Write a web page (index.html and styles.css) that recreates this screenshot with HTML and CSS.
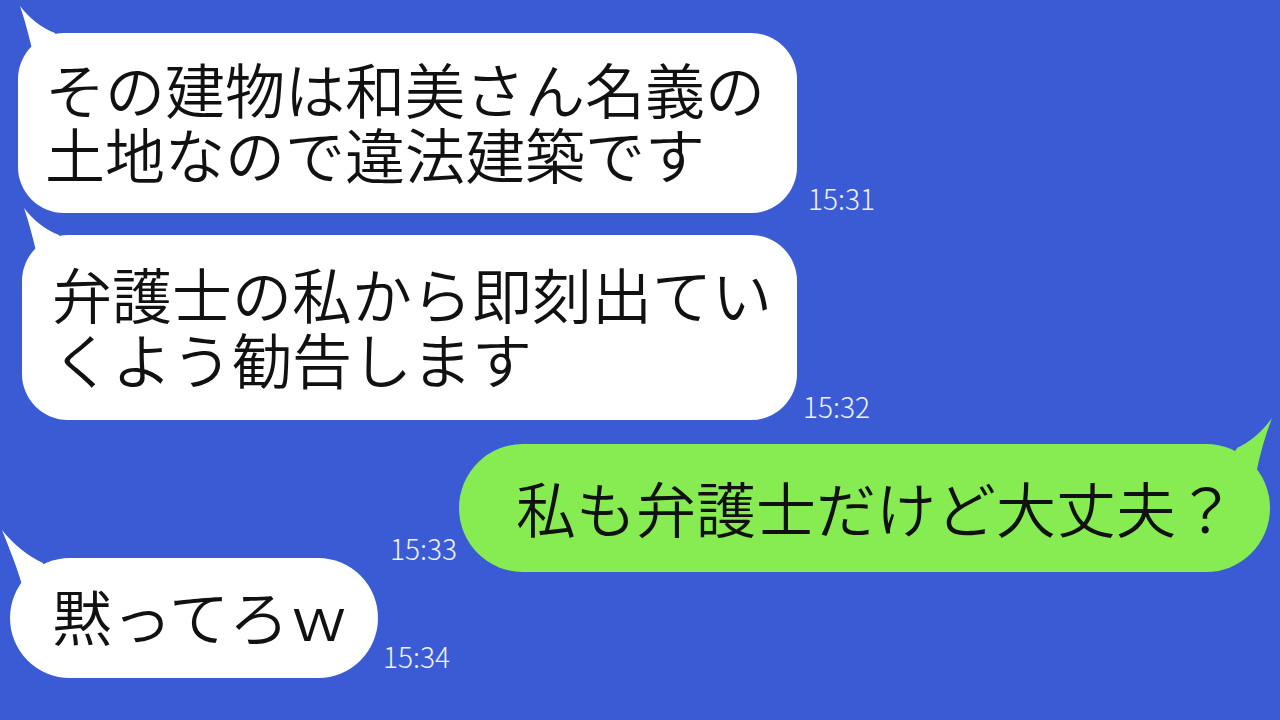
FILE: index.html
```html
<!DOCTYPE html>
<html lang="ja">
<head>
  <meta charset="UTF-8" />
  <meta name="viewport" content="width=device-width, initial-scale=1.0"/>
  <title>トーク</title>
  <link rel="stylesheet" href="styles.css">
</head>
<body>

  <div class="chat">

    <div class="row left r1">
      <div class="bubble white b1">
        <svg class="tail" viewBox="0 0 60 60" width="60" height="60"><path d="M12 3 C22 16 34 25 47 30 L56 58 L27 58 C22 38 18 20 12 3 Z"/></svg>
        その建物は和美さん名義の<br>土地なので違法建築です
      </div>
      <span class="time t1">15:31</span>
    </div>

    <div class="row left r2">
      <div class="bubble white b2">
        <svg class="tail" viewBox="0 0 60 60" width="60" height="60"><path d="M12 3 C22 16 34 25 47 30 L56 58 L27 58 C22 38 18 20 12 3 Z"/></svg>
        弁護士の私から即刻出てい<br>くよう勧告します
      </div>
      <span class="time t2">15:32</span>
    </div>

    <div class="row right r3">
      <span class="time t3">15:33</span>
      <div class="bubble green b3">
        <svg class="tail" viewBox="0 0 60 60" width="60" height="60"><path d="M8 4 C18 18 30 28 43 34 L58 60 L24 60 C20 40 15 22 8 4 Z"/></svg>
        私も弁護士だけど大丈夫？
      </div>
    </div>

    <div class="row left r4">
      <div class="bubble white b4">
        <svg class="tail" viewBox="0 0 60 60" width="60" height="60"><path d="M12 2 C24 17 38 28 53 35 L58 60 L33 60 C28 42 20 22 12 2 Z"/></svg>
        黙ってろｗ
      </div>
      <span class="time t4">15:34</span>
    </div>

  </div>

</body>
</html>
```

FILE: styles.css
```css
body {
  margin: 0;
  background-color: #3b5bd4;
  font-family: "Noto Sans CJK JP", "Noto Sans", sans-serif;
  color: #111;
  height: 720px;
  overflow: hidden;
}

.chat {
  display: flex;
  flex-direction: column;
}

.row {
  display: flex;
  align-items: flex-end;
}

.row.right {
  justify-content: flex-end;
}

/* filas */
.r1 { margin-top: 33px; padding-left: 18px; }
.r2 { margin-top: 22px; padding-left: 22px; }
.r3 { margin-top: 24px; padding-right: 10px; }
.r4 { margin-top: -14px; padding-left: 10px; }

.bubble {
  position: relative;
  font-size: 60px;
  font-weight: 350;
  line-height: 65px;
  white-space: nowrap;
}

.bubble.white { background-color: #fff; }
.bubble.green { background-color: #86ec52; }

.tail {
  position: absolute;
  top: -30px;
  left: -10px;
}

.white .tail path { fill: #fff; }
.green .tail path { fill: #86ec52; }

.b1 {
  border-radius: 46px;
  padding: 22px 32px 28px 27px;
}

.b2 {
  border-radius: 46px;
  padding: 25px 25px 30px 30px;
}

.b3 {
  border-radius: 64px;
  padding: 30px 34px 33px 57px;
}

.b3 .tail {
  left: auto;
  right: -10px;
  transform: scaleX(-1);
}

.b4 {
  border-radius: 60px;
  padding: 24px 29px 31px 42px;
}

.b4 .tail {
  left: -20px;
}

.time {
  color: #eef2ff;
  font-size: 28px;
  font-weight: 300;
  line-height: 28px;
}

.t1 { margin-left: 11px; margin-bottom: 1px; }
.t2 { margin-left: 6px; margin-bottom: 0; }
.t3 { margin-right: 2px; margin-bottom: 10px; }
.t4 { margin-left: 5px; margin-bottom: 8px; }
```
